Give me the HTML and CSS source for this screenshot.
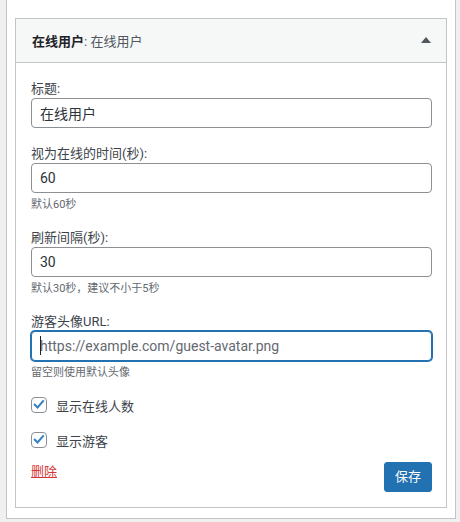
FILE: index.html
```html
<!DOCTYPE html>
<html lang="zh-CN">
<head>
<meta charset="utf-8">
<title>在线用户</title>
<link rel="stylesheet" href="styles.css">
</head>
<body>
<div class="panel">
  <div class="widget">
    <div class="widget-top">
      <h3 class="widget-title"><strong>在线用户</strong><span class="in-title">: 在线用户</span></h3>
      <span class="toggle" aria-hidden="true"></span>
    </div>
    <form class="widget-inside">
      <p class="field">
        <label for="t">标题:</label>
        <input id="t" type="text" value="在线用户">
      </p>
      <p class="field">
        <label for="o">视为在线的时间(秒):</label>
        <input id="o" type="text" value="60">
        <span class="description">默认60秒</span>
      </p>
      <p class="field">
        <label for="r">刷新间隔(秒):</label>
        <input id="r" type="text" value="30">
        <span class="description">默认30秒，建议不小于5秒</span>
      </p>
      <p class="field last">
        <label for="g">游客头像URL:</label>
        <span class="focus-wrap">
          <input id="g" class="focused" type="text" placeholder="https://example.com/guest-avatar.png">
          <span class="caret"></span>
        </span>
        <span class="description">留空则使用默认头像</span>
      </p>
      <label class="check">
        <span class="cb"><svg viewBox="0 0 16 16" width="14" height="14"><path d="M3.2 7.6 L6.3 10.8 L12.6 3.6" fill="none" stroke="#3582c4" stroke-width="2.4" stroke-linecap="square" stroke-linejoin="miter"/></svg></span>
        <span>显示在线人数</span>
      </label>
      <label class="check">
        <span class="cb"><svg viewBox="0 0 16 16" width="14" height="14"><path d="M3.2 7.6 L6.3 10.8 L12.6 3.6" fill="none" stroke="#3582c4" stroke-width="2.4" stroke-linecap="square" stroke-linejoin="miter"/></svg></span>
        <span>显示游客</span>
      </label>
      <div class="actions">
        <a class="delete" href="#">删除</a>
        <button type="button" class="save">保存</button>
      </div>
    </form>
  </div>
</div>
</body>
</html>
```
FILE: styles.css
```css
html, body {
  margin: 0;
  padding: 0;
}
body {
  background: #f0f0f1;
  font-family: Roboto, "Noto Sans CJK SC", sans-serif;
  font-size: 13px;
  color: #3c434a;
  height: 522px;
}
.panel {
  box-sizing: border-box;
  width: 450px;
  margin-left: 6px;
  background: #fff;
  border: 1px solid #c3c4c7;
  border-top: 0;
  padding: 18px 8px 10px;
}
.widget {
  border: 1px solid #c3c4c7;
  background: #fff;
}
.widget-top {
  height: 43px;
  background: #f6f7f7;
  border-bottom: 1px solid #c3c4c7;
  display: flex;
  align-items: center;
  justify-content: space-between;
  padding: 0 15px 0 16px;
}
.widget-title {
  margin: 0;
  font-size: 13px;
  font-weight: 400;
  line-height: 20px;
  padding-top: 2px;
}
.widget-title strong {
  font-weight: 700;
  color: #1d2327;
}
.in-title {
  color: #50575e;
}
.toggle {
  width: 0;
  height: 0;
  border-left: 5px solid transparent;
  border-right: 5px solid transparent;
  border-bottom: 6px solid #50575e;
  margin-top: -1px;
}
.widget-inside {
  padding: 17px 14px 15px 15px;
  margin: 0;
}
.field {
  margin: 0 0 17px;
}
.field.last {
  margin-bottom: 16px;
}
.field label {
  display: block;
  line-height: 18px;
  font-size: 13px;
  color: #3c434a;
}
.field input {
  display: block;
  box-sizing: border-box;
  width: 100%;
  height: 30px;
  margin: 0;
  border: 1px solid #8c8f94;
  border-radius: 4px;
  padding: 0 8px;
  font-family: Roboto, "Noto Sans CJK SC", sans-serif;
  font-size: 14px;
  color: #2c3338;
  background: #fff;
  outline: none;
}
.field input.focused {
  border-color: #2271b1;
  box-shadow: 0 0 0 1px #2271b1;
}
.field input::placeholder {
  color: #646970;
  opacity: 1;
}
.focus-wrap {
  display: block;
  position: relative;
}
.caret {
  position: absolute;
  left: 9px;
  top: 5px;
  width: 1px;
  height: 19px;
  background: #1d2327;
}
.description {
  display: block;
  margin-top: 4px;
  line-height: 15px;
  font-size: 11px;
  color: #646970;
}
.check {
  display: flex;
  align-items: center;
  gap: 9px;
  height: 18px;
  margin: 0 0 17px;
  font-size: 13px;
  color: #3c434a;
}
.check + .check {
  margin-bottom: 13px;
}
.cb {
  box-sizing: border-box;
  width: 16px;
  height: 16px;
  border: 1px solid #8c8f94;
  border-radius: 4px;
  display: flex;
  align-items: center;
  justify-content: center;
  background: #fff;
}
.cb svg {
  display: block;
}
.actions {
  display: flex;
  justify-content: space-between;
  align-items: flex-start;
}
.delete {
  line-height: 20px;
  font-size: 13px;
  color: #d63638;
  text-decoration: underline;
}
.save {
  height: 30px;
  padding: 0 10px;
  border: 1px solid #2271b1;
  border-radius: 3px;
  background: #2271b1;
  color: #fff;
  font-family: Roboto, "Noto Sans CJK SC", sans-serif;
  font-size: 13px;
  line-height: 28px;
  margin-right: 0;
}
```
